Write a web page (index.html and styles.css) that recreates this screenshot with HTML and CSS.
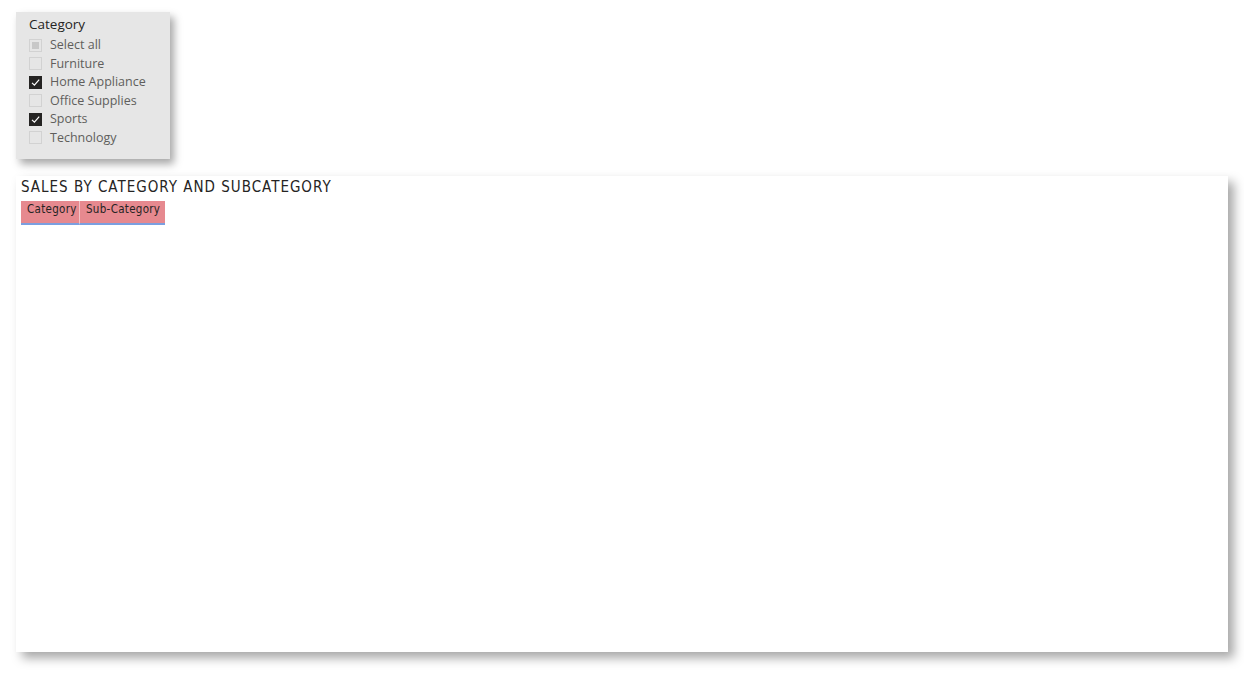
FILE: index.html
```html
<!DOCTYPE html>
<html>
<head>
<meta charset="utf-8">
<link rel="stylesheet" href="styles.css">
</head>
<body>
<div class="page">
  <div class="slicer">
    <div class="slicer-title">Category</div>
    <div class="item"><span class="box partial"></span><span class="label">Select all</span></div>
    <div class="item"><span class="box"></span><span class="label">Furniture</span></div>
    <div class="item"><span class="box checked"><svg viewBox="0 0 13 13" width="13" height="13"><path d="M3 6.8 L5.4 9.2 L10.2 3.6" fill="none" stroke="#fff" stroke-width="1.2"/></svg></span><span class="label">Home Appliance</span></div>
    <div class="item"><span class="box"></span><span class="label">Office Supplies</span></div>
    <div class="item"><span class="box checked"><svg viewBox="0 0 13 13" width="13" height="13"><path d="M3 6.8 L5.4 9.2 L10.2 3.6" fill="none" stroke="#fff" stroke-width="1.2"/></svg></span><span class="label">Sports</span></div>
    <div class="item"><span class="box"></span><span class="label">Technology</span></div>
  </div>
  <div class="visual">
    <div class="visual-title">SALES BY CATEGORY AND SUBCATEGORY</div>
    <div class="header-row">
      <div class="hcell c1">Category</div>
      <div class="hcell c2">Sub-Category</div>
    </div>
  </div>
</div>
</body>
</html>
```
FILE: styles.css
```css
html, body {
  margin: 0;
  padding: 0;
  background: #ffffff;
}
.page {
  width: 1244px;
  height: 682px;
  padding: 12px 0 0 16px;
  box-sizing: border-box;
  display: flex;
  flex-direction: column;
  align-items: flex-start;
}
.slicer {
  width: 154px;
  height: 147px;
  box-sizing: border-box;
  background: #e6e6e6;
  box-shadow: 4px 5px 8px rgba(0,0,0,0.35);
  padding: 3px 0 0 13px;
  font-family: "Open Sans", "Noto Sans", sans-serif;
}
.slicer-title {
  font-size: 13.5px;
  color: #252423;
  line-height: 18px;
  margin-bottom: 3px;
}
.item {
  display: flex;
  align-items: center;
  height: 18.5px;
}
.box {
  width: 13px;
  height: 13px;
  box-sizing: border-box;
  border: 1px solid #d2d2d2;
  background: #e6e6e6;
  margin-right: 8px;
  position: relative;
  flex: none;
}
.box.partial::after {
  content: "";
  position: absolute;
  left: 2px;
  top: 2px;
  width: 7px;
  height: 7px;
  background: #c8c8c8;
}
.box.checked {
  background: #252423;
  border-color: #252423;
}
.box.checked svg {
  position: absolute;
  left: -1px;
  top: -1px;
}
.label {
  font-size: 12.5px;
  color: #605e5c;
  line-height: 18px;
}
.visual {
  margin-top: 17px;
  width: 1212px;
  height: 476px;
  background: #ffffff;
  box-shadow: 6px 6px 10px rgba(0,0,0,0.35);
  box-sizing: border-box;
  padding: 2px 0 0 5px;
}
.visual-title {
  font-family: "DejaVu Sans Condensed", "DejaVu Sans", sans-serif;
  font-size: 15px;
  color: #252423;
  line-height: 18px;
  letter-spacing: 1px;
}
.header-row {
  display: flex;
  margin-top: 5px;
}
.hcell {
  background: #e6898f;
  height: 24px;
  border-bottom: 2px solid #7b9fe0;
  font-family: "DejaVu Sans Condensed", "DejaVu Sans", sans-serif;
  font-size: 11.5px;
  letter-spacing: 0.3px;
  color: #252423;
  line-height: 14px;
  padding: 1px 0 0 6px;
  box-sizing: border-box;
}
.c1 {
  width: 59px;
  border-right: 1px solid #f0c4c7;
}
.c2 {
  width: 85px;
}
```
